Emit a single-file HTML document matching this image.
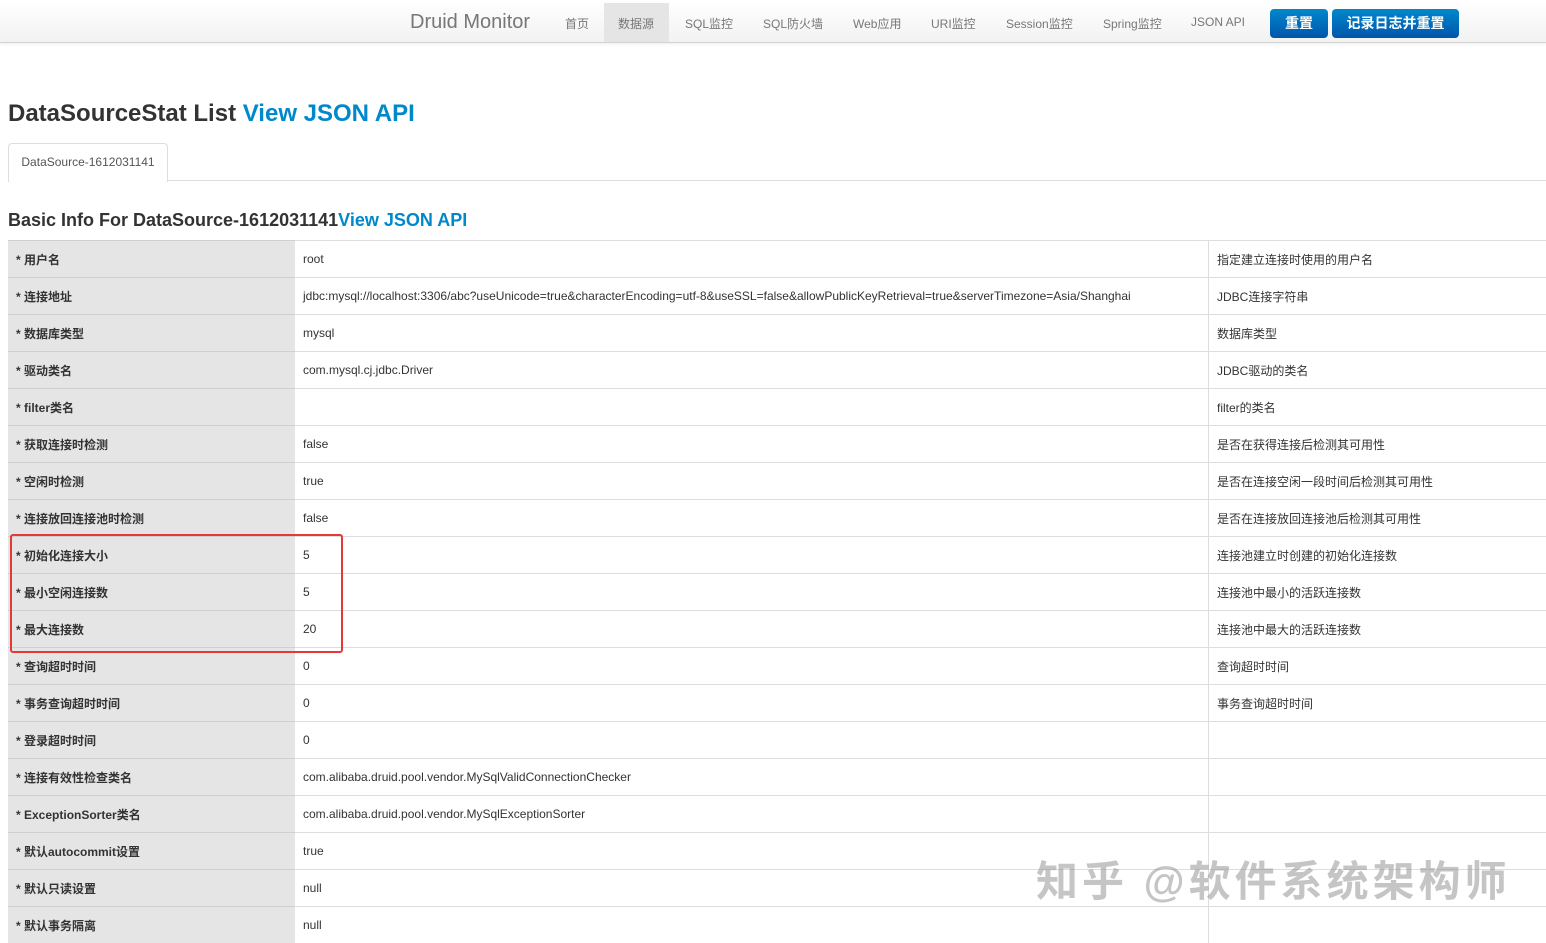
<!DOCTYPE html>
<html><head><meta charset="utf-8"><style>
body{margin:0;width:1546px;height:937px;overflow:hidden;background:#fff;font-family:"Liberation Sans","Noto Sans CJK SC",sans-serif;color:#333}
.nav{position:absolute;top:0;left:0;width:1546px;height:42px;background:linear-gradient(#fff,#f2f2f2);border-bottom:1px solid #d4d4d4;box-shadow:0 1px 3px rgba(0,0,0,.08)}
.brand{position:absolute;left:410px;top:11px;font-size:20px;color:#777}
.nav a{position:absolute;top:15px;font-size:12px;color:#777}
.act{position:absolute;left:604px;top:3px;width:65px;height:39px;background:#e5e5e5}
.btn{position:absolute;top:9px;height:29px;background:linear-gradient(#0088cc,#0055aa);color:#fff;border-radius:4px;font-size:14px;font-weight:bold;line-height:29px;text-align:center}
h1{position:absolute;left:8px;top:100px;margin:0;font-size:24px;font-weight:bold;color:#333}
a.l{color:#0088cc}
.tab{position:absolute;left:8px;top:143px;width:158px;height:38px;border:1px solid #ddd;border-bottom:none;border-radius:4px 4px 0 0;background:#fff;font-size:12px;color:#555;line-height:37px;text-align:center;z-index:2}
.tl{position:absolute;left:8px;top:180px;width:1538px;border-top:1px solid #ddd}
h3{position:absolute;left:8px;top:210px;margin:0;font-size:18px;font-weight:bold;color:#333}
table{position:absolute;left:8px;top:240px;border-collapse:collapse;width:1545px}
td{height:36px;border-top:1px solid #ddd;padding:0 8px;font-size:12px;color:#333;vertical-align:middle}
td.k{width:271px;background:#e5e5e5;font-weight:bold;border-top:1px solid #d0d0d0}
td.v{width:897px;border-right:1px solid #ddd}
.red{position:absolute;left:10px;top:534px;width:329px;height:115px;border:2px solid #e53935;border-radius:3px}
.wm{position:absolute;left:1036px;top:848px;font-size:42px;font-weight:bold;color:rgba(140,140,140,.5);letter-spacing:4px}
</style></head><body>
<div class="nav"><div class="act"></div><div class="brand">Druid Monitor</div>
<a style="left:565px">首页</a><a style="left:618px">数据源</a><a style="left:685px">SQL监控</a><a style="left:763px">SQL防火墙</a><a style="left:853px">Web应用</a><a style="left:931px">URI监控</a><a style="left:1006px">Session监控</a><a style="left:1103px">Spring监控</a><a style="left:1191px">JSON API</a>
<div class="btn" style="left:1270px;width:58px">重置</div><div class="btn" style="left:1332px;width:127px">记录日志并重置</div></div>
<h1>DataSourceStat List <a class="l">View JSON API</a></h1>
<div class="tab">DataSource-1612031141</div><div class="tl"></div>
<h3>Basic Info For DataSource-1612031141<a class="l">View JSON API</a></h3>
<table>
<tr><td class="k">* 用户名</td><td class="v">root</td><td>指定建立连接时使用的用户名</td></tr>
<tr><td class="k">* 连接地址</td><td class="v">jdbc:mysql://localhost:3306/abc?useUnicode=true&amp;characterEncoding=utf-8&amp;useSSL=false&amp;allowPublicKeyRetrieval=true&amp;serverTimezone=Asia/Shanghai</td><td>JDBC连接字符串</td></tr>
<tr><td class="k">* 数据库类型</td><td class="v">mysql</td><td>数据库类型</td></tr>
<tr><td class="k">* 驱动类名</td><td class="v">com.mysql.cj.jdbc.Driver</td><td>JDBC驱动的类名</td></tr>
<tr><td class="k">* filter类名</td><td class="v"></td><td>filter的类名</td></tr>
<tr><td class="k">* 获取连接时检测</td><td class="v">false</td><td>是否在获得连接后检测其可用性</td></tr>
<tr><td class="k">* 空闲时检测</td><td class="v">true</td><td>是否在连接空闲一段时间后检测其可用性</td></tr>
<tr><td class="k">* 连接放回连接池时检测</td><td class="v">false</td><td>是否在连接放回连接池后检测其可用性</td></tr>
<tr><td class="k">* 初始化连接大小</td><td class="v">5</td><td>连接池建立时创建的初始化连接数</td></tr>
<tr><td class="k">* 最小空闲连接数</td><td class="v">5</td><td>连接池中最小的活跃连接数</td></tr>
<tr><td class="k">* 最大连接数</td><td class="v">20</td><td>连接池中最大的活跃连接数</td></tr>
<tr><td class="k">* 查询超时时间</td><td class="v">0</td><td>查询超时时间</td></tr>
<tr><td class="k">* 事务查询超时时间</td><td class="v">0</td><td>事务查询超时时间</td></tr>
<tr><td class="k">* 登录超时时间</td><td class="v">0</td><td></td></tr>
<tr><td class="k">* 连接有效性检查类名</td><td class="v">com.alibaba.druid.pool.vendor.MySqlValidConnectionChecker</td><td></td></tr>
<tr><td class="k">* ExceptionSorter类名</td><td class="v">com.alibaba.druid.pool.vendor.MySqlExceptionSorter</td><td></td></tr>
<tr><td class="k">* 默认autocommit设置</td><td class="v">true</td><td></td></tr>
<tr><td class="k">* 默认只读设置</td><td class="v">null</td><td></td></tr>
<tr><td class="k">* 默认事务隔离</td><td class="v">null</td><td></td></tr>
</table>
<div class="red"></div>
<div class="wm">知乎 @软件系统架构师</div>
</body></html>
